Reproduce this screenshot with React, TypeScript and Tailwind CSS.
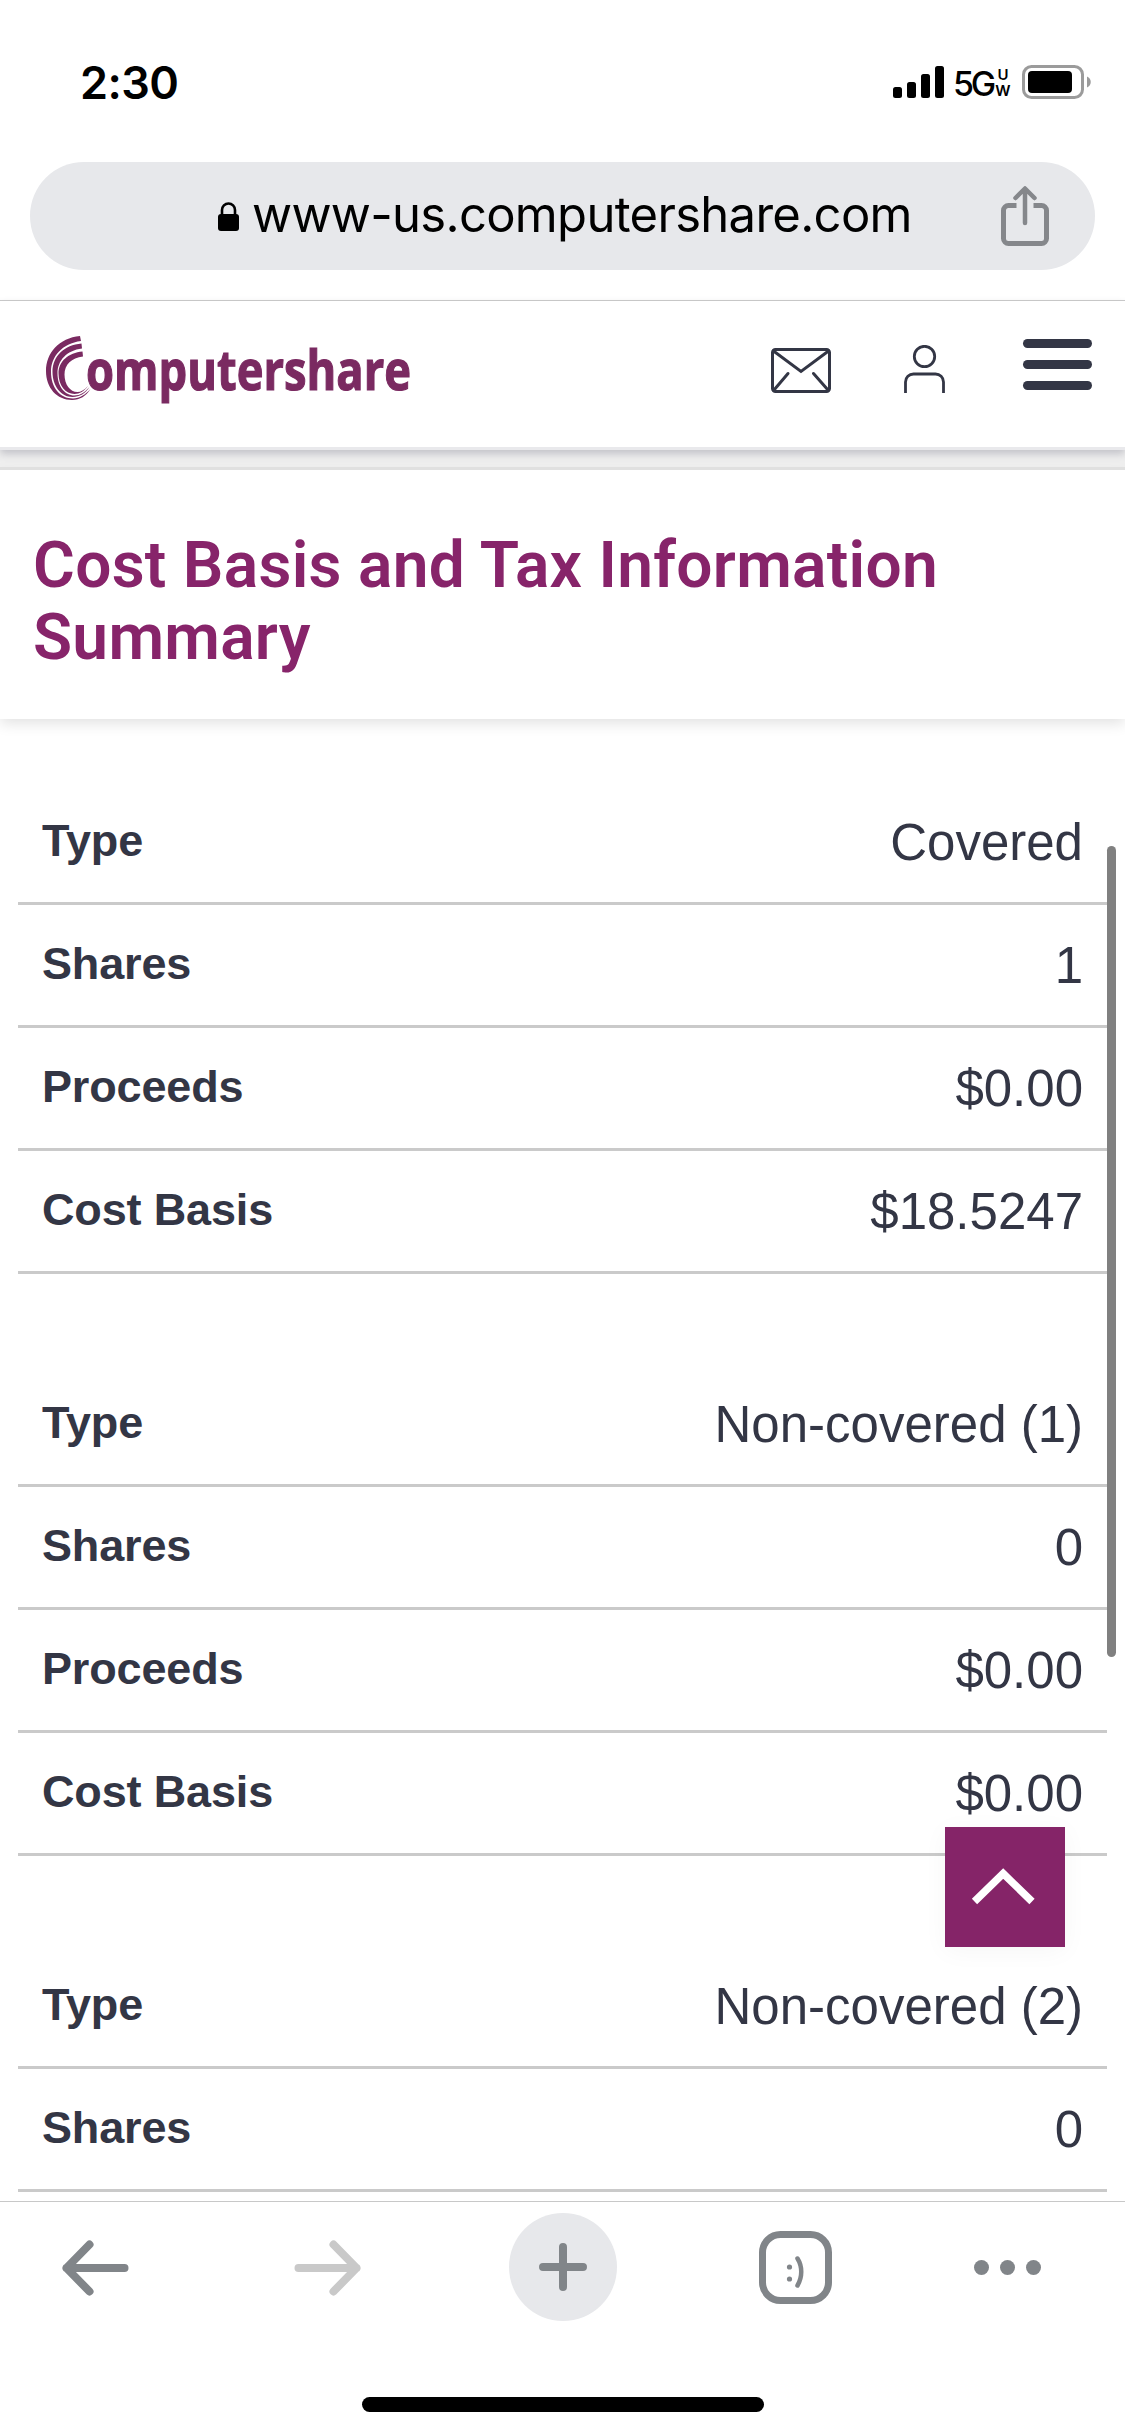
import type { ReactNode } from "react";

interface RowType {
  label: string;
  value: string;
}

const lots: RowType[][] = [
  [
    { label: "Type", value: "Covered" },
    { label: "Shares", value: "1" },
    { label: "Proceeds", value: "$0.00" },
    { label: "Cost Basis", value: "$18.5247" },
  ],
  [
    { label: "Type", value: "Non-covered (1)" },
    { label: "Shares", value: "0" },
    { label: "Proceeds", value: "$0.00" },
    { label: "Cost Basis", value: "$0.00" },
  ],
  [
    { label: "Type", value: "Non-covered (2)" },
    { label: "Shares", value: "0" },
  ],
];

function StatusBar() {
  return (
    <div className="flex h-[162px] items-start justify-between pt-[55px] pr-[33px] pl-[80px] font-['Inter',sans-serif] text-black">
      <span className="pt-px text-[45px] leading-[54px] font-semibold tracking-[-0.6px]">2:30</span>
      <div className="flex h-[54px] items-center">
        <svg width="51" height="32" viewBox="0 0 51 32">
          <rect x="0" y="21" width="9" height="11" rx="2.5" />
          <rect x="14" y="16" width="9" height="16" rx="2.5" />
          <rect x="28" y="8" width="9" height="24" rx="2.5" />
          <rect x="42" y="0" width="9" height="32" rx="2.5" />
        </svg>
        <span className="ml-[9px] w-[42px] pt-[3px] text-[34px] leading-[51px] font-medium tracking-[-3.2px]">
          5G
        </span>
        <span className="flex w-[16px] flex-col items-center pt-[2px] text-[15px] leading-[16px] font-semibold">
          <span>U</span>
          <span>W</span>
        </span>
        <svg className="ml-[11px]" width="70" height="34" viewBox="0 0 70 34">
          <rect x="1.5" y="1.5" width="59" height="31" rx="8" fill="none" stroke="#9b9b9b" strokeWidth="3" />
          <rect x="6" y="6" width="44" height="22" rx="4" />
          <path d="M65 11.5c5 2 5 9 0 11z" fill="#9b9b9b" />
        </svg>
      </div>
    </div>
  );
}

function AddressBar() {
  return (
    <div className="mx-[30px] flex h-[108px] items-center rounded-full bg-[#e7e8eb] pr-[46px] pl-[188px]">
      <svg width="21" height="29" viewBox="0 0 21 29">
        <rect x="0" y="12" width="21" height="17" rx="3" />
        <path d="M4 13V8a6.5 6.5 0 0 1 13 0v5" fill="none" stroke="#000" strokeWidth="2.6" />
      </svg>
      <span className="ml-[13px] flex-1 pb-[2px] font-['Inter',sans-serif] text-[49px] tracking-[-0.7px] whitespace-nowrap text-black">
        www-us.computershare.com
      </span>
      <svg width="48" height="60" viewBox="0 0 48 60" fill="none" stroke="#85878b" strokeWidth="5">
        <path d="M15.5 19.5H7.5a5 5 0 0 0-5 5v28a5 5 0 0 0 5 5h33a5 5 0 0 0 5-5v-28a5 5 0 0 0-5-5h-8" />
        <path d="M24 37V3M14.5 12L24 2.5 33.5 12" strokeWidth="4.5" strokeLinecap="round" strokeLinejoin="round" />
      </svg>
    </div>
  );
}

function Logo() {
  return (
    <svg className="overflow-visible" width="376" height="94" viewBox="0 -14 376 94" fill="#7a2a61">
      <path d="M34 0C13 2 0 17 0 35c0 17 11 29 26 29 8 0 14-4 18.500-11-5 5.500-11 9.500-17.500 9.500C14 62.500 5 51.500 5 36 5 20.500 16 7.500 35 5z" />
      <path d="M35.500 7.500C18.500 9 6.500 20 6.500 36c0 14 8.500 25 20 25 7 0 13-3.500 17-10C39 56 34 59.500 28.500 59.500 18.500 59.500 11.500 50 11.500 37.500c0-13 9-23 24.500-25z" />
      <path d="M36.500 15.500C22.500 17 12.500 25 12.500 37.500c0 12 7 20.500 16 20.500 5 0 10-3 13.500-8C38 54 35 56 31.500 56 24 56 18.500 48.500 18.500 38.500c0-10 7-16.500 18.500-18z" />
      <text
        x="40"
        y="53.5"
        className="font-['Open_Sans',sans-serif] text-[56px] font-bold"
        stroke="#7a2a61"
        strokeWidth="1.2"
        textLength="325"
        lengthAdjust="spacingAndGlyphs"
      >
        omputershare
      </text>
    </svg>
  );
}

function SiteHeader() {
  return (
    <div className="relative z-10 flex h-[149px] items-start border-b-[3px] border-[#e9e9ec] bg-white pr-[33px] pl-[46px] shadow-[0_4px_8px_#c2c2c8]">
      <div className="pt-[21px]">
        <Logo />
      </div>
      <div className="ml-auto flex pt-[38px]">
        <svg className="mt-[9px]" width="60" height="45" viewBox="0 0 60 45" fill="none" stroke="#333645" strokeWidth="3" strokeLinecap="round">
          <rect x="1.5" y="1.5" width="57" height="42" rx="3" />
          <path d="M2.5 3L30 23.5 57.5 3M3 42l14-16.5M57 42L42.5 25.5" />
        </svg>
        <svg className="mt-[6px] ml-[73px]" width="41" height="48" viewBox="0 0 41 48" fill="none" stroke="#333645" strokeWidth="2.8">
          <circle cx="20.5" cy="11.5" r="10.2" />
          <path d="M1.5 48V37a8 8 0 0 1 8-8h22a8 8 0 0 1 8 8v11" />
        </svg>
        <div className="ml-[78px] flex flex-col gap-3">
          <span className="h-[9px] w-[69px] rounded-full bg-[#333645]" />
          <span className="h-[9px] w-[69px] rounded-full bg-[#333645]" />
          <span className="h-[9px] w-[69px] rounded-full bg-[#333645]" />
        </div>
      </div>
    </div>
  );
}

function LotTable({ rows }: { rows: RowType[] }) {
  return (
    <div className="mb-[90px]">
      {rows.map((row) => (
        <div
          key={row.label}
          className="flex h-[123px] justify-between border-b-[3px] border-[#cacaca] px-6 text-[#333645]"
        >
          <span className="pt-[33px] text-[45px] leading-[52px] font-bold tracking-[-0.15px]">{row.label}</span>
          <span className="pt-[32px] text-[51px] leading-[58px]">{row.value}</span>
        </div>
      ))}
    </div>
  );
}

function ToolbarSlot({ children }: { children: ReactNode }) {
  return <div className="flex h-[108px] items-center justify-center pt-px">{children}</div>;
}

function BottomToolbar() {
  return (
    <div className="h-[235px] border-t border-[#c8c8c8] bg-white">
      <div className="flex pt-[11px] pl-[62px]">
        <ToolbarSlot>
          <svg width="67" height="56" viewBox="0 0 67 56" fill="none" stroke="#818589" strokeWidth="8" strokeLinecap="round" strokeLinejoin="round">
            <path d="M62.5 28H4.5M27.5 4.5L4.5 28l23 23.5" />
          </svg>
        </ToolbarSlot>
        <div className="ml-[165px]">
          <ToolbarSlot>
            <svg width="67" height="56" viewBox="0 0 67 56" fill="none" stroke="#c9c9c9" strokeWidth="8" strokeLinecap="round" strokeLinejoin="round">
              <path d="M4.5 28h58M39.5 4.5l23 23.5-23 23.5" />
            </svg>
          </ToolbarSlot>
        </div>
        <div className="ml-[148px] flex size-[108px] items-center justify-center rounded-full bg-[#e7e8eb]">
          <svg width="48" height="48" viewBox="0 0 48 48" stroke="#818589" strokeWidth="8" strokeLinecap="round">
            <path d="M4 24h40M24 4v40" />
          </svg>
        </div>
        <div className="ml-[142px]">
          <ToolbarSlot>
            <svg width="73" height="73" viewBox="0 0 73 73" fill="none" stroke="#818589">
              <rect x="3.5" y="3.5" width="66" height="66" rx="18" strokeWidth="7" />
              <g fill="#818589" stroke="none">
                <circle cx="30.5" cy="36" r="2.6" />
                <circle cx="30.5" cy="48" r="2.6" />
              </g>
              <path d="M38.5 27.5c5 8 5 18.5 0 27" strokeWidth="4.5" strokeLinecap="round" />
            </svg>
          </ToolbarSlot>
        </div>
        <div className="ml-[142px]">
          <ToolbarSlot>
            <div className="flex gap-[11px]">
              <span className="size-[15px] rounded-full bg-[#818589]" />
              <span className="size-[15px] rounded-full bg-[#818589]" />
              <span className="size-[15px] rounded-full bg-[#818589]" />
            </div>
          </ToolbarSlot>
        </div>
      </div>
      <div className="mx-auto mt-[76px] h-[15px] w-[402px] rounded-full bg-black" />
    </div>
  );
}

function App() {
  return (
    <div className="relative flex h-[2436px] w-[1125px] flex-col overflow-hidden bg-white font-['Liberation_Sans',Arial,sans-serif]">
      <StatusBar />
      <AddressBar />
      <div className="mt-[30px] h-px shrink-0 bg-[#c8c8c8]" />
      <SiteHeader />
      <div className="h-[20px] shrink-0 border-b-[3px] border-[#e0e0e0] bg-[#efefef]" />
      <div className="h-[249px] shrink-0 bg-white pt-[60px] pl-[33px] shadow-[0_4px_14px_#e0e0e0]">
        <h1 className="font-['Roboto',sans-serif] text-[64px] leading-[72px] font-semibold tracking-[0.3px] text-[#87246a]">
          Cost Basis and Tax Information
          <br />
          Summary
        </h1>
      </div>
      <div className="min-h-0 flex-1 overflow-hidden px-[18px] pt-[63px]">
        {lots.map((rows, i) => (
          <LotTable key={i} rows={rows} />
        ))}
      </div>
      <BottomToolbar />

      {/* Scroll indicator */}
      <div className="absolute top-[846px] right-[9px] h-[811px] w-[9px] rounded-full bg-[#808080]" />

      {/* Back to top */}
      <button className="absolute top-[1827px] left-[945px] size-[120px] bg-[#852468] shadow-[0_4px_24px_rgba(0,0,0,0.04)]">
        <svg width="120" height="120" viewBox="0 0 120 120" fill="none" stroke="#fff" strokeWidth="7.5">
          <path d="M29.5 74.5L58.2 46.5 87 74.5" />
        </svg>
      </button>
    </div>
  );
}

export default App;
